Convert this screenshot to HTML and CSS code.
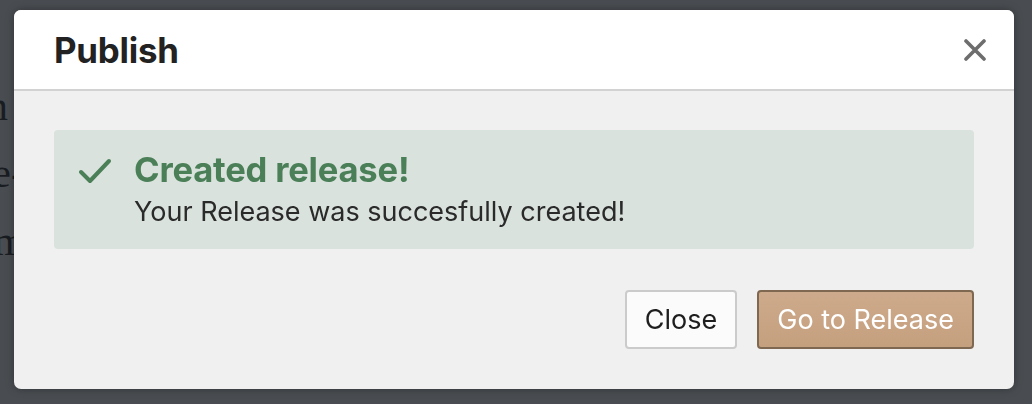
FILE: index.html
```html
<!DOCTYPE html>
<html lang="en">
<head>
<meta charset="utf-8">
<title>Publish</title>
<link rel="stylesheet" href="styles.css">
</head>
<body>
<div class="page">
  <div class="page-line line-1"><span>publication</span></div>
  <div class="page-line line-2"><span>the re-</span></div>
  <div class="page-line line-3"><span>in a form</span></div>
</div>
<div class="overlay">
  <div class="modal" role="dialog" aria-labelledby="modal-title">
    <div class="modal-header">
      <h2 class="modal-title" id="modal-title">Publish</h2>
      <button class="modal-close" aria-label="Close">
        <svg width="22" height="22" viewBox="0 0 22 22"><path d="M2 2 L20 20 M20 2 L2 20" stroke="#6d6d6d" stroke-width="3.6" stroke-linecap="round" fill="none"/></svg>
      </button>
    </div>
    <div class="modal-body">
      <div class="alert">
        <svg class="alert-icon" width="34" height="28" viewBox="0 0 34 28"><path d="M3 15 L12 24 L31 4" stroke="#4a7f57" stroke-width="4" stroke-linecap="round" stroke-linejoin="round" fill="none"/></svg>
        <div class="alert-text">
          <div class="alert-title">Created release!</div>
          <div class="alert-msg">Your Release was succesfully created!</div>
        </div>
      </div>
      <div class="modal-footer">
        <button class="btn btn-secondary">Close</button>
        <button class="btn btn-primary">Go to Release</button>
      </div>
    </div>
  </div>
</div>
</body>
</html>
```
FILE: styles.css
```css
html, body {
  margin: 0;
  padding: 0;
}
body {
  width: 1032px;
  height: 404px;
  overflow: hidden;
  background: #ffffff;
  font-family: "Inter", "Liberation Sans", sans-serif;
}
.page {
  padding-top: 73px;
  font-family: "Liberation Serif", serif;
  font-size: 42px;
  line-height: 67px;
  color: #111;
}
.page-line {
  height: 67px;
  display: flex;
  justify-content: flex-end;
  white-space: nowrap;
}
.line-1 {
  width: 8px;
}
.line-2 {
  width: 25px;
  height: 68px;
}
.line-3 {
  width: 26px;
  height: 64px;
}
.overlay {
  position: fixed;
  inset: 0;
  background: rgba(28, 32, 37, 0.8);
}
.modal {
  margin: 10px 0 0 14px;
  width: 1000px;
  height: 379px;
  border-radius: 7px;
  overflow: hidden;
  background: #f0f0f0;
  box-shadow: 0 0 8px rgba(0, 0, 0, 0.35);
  display: flex;
  flex-direction: column;
}
.modal-header {
  height: 79px;
  background: #ffffff;
  border-bottom: 2px solid #d2d2d2;
  display: flex;
  align-items: center;
  justify-content: space-between;
  padding: 0 28px 0 40px;
}
.modal-title {
  margin: 0;
  font-size: 34.8px;
  font-weight: 700;
  color: #222;
  letter-spacing: -0.2px;
}
.modal-close {
  border: none;
  background: none;
  padding: 0;
  width: 22px;
  height: 22px;
  display: flex;
}
.modal-body {
  flex: 1;
  padding: 39px 40px 40px;
  display: flex;
  flex-direction: column;
  gap: 41px;
}
.alert {
  height: 119px;
  box-sizing: border-box;
  background: #d9e2dd;
  border-radius: 4px;
  display: flex;
  align-items: flex-start;
  padding: 19px 24px 0;
  gap: 22px;
}
.alert-icon {
  margin-top: 8px;
}
.alert-title {
  font-size: 34.6px;
  font-weight: 700;
  color: #4a7f57;
  line-height: 40px;
  letter-spacing: -0.2px;
}
.alert-msg {
  font-size: 27px;
  color: #2a2a2a;
  line-height: 45px;
}
.modal-footer {
  display: flex;
  justify-content: flex-end;
  gap: 20px;
}
.btn {
  height: 59px;
  box-sizing: border-box;
  border-radius: 4px;
  font-family: inherit;
  font-size: 27px;
  padding: 0 18px;
}
.btn-secondary {
  background: #fbfbfb;
  border: 2px solid #cbcbcb;
  color: #1e1e1e;
}
.btn-primary {
  background: linear-gradient(#cdaa8b, #c5a07f);
  border: 2px solid #7f6852;
  color: #ffffff;
}
```
